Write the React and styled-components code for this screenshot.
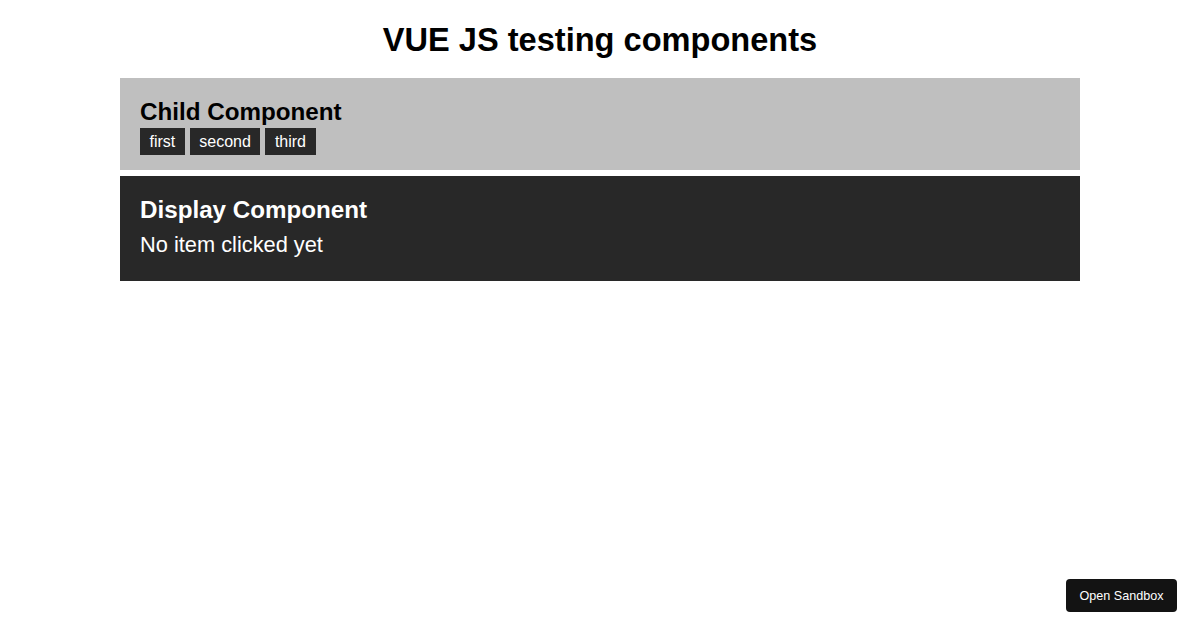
import React from 'react';
import styled, { createGlobalStyle } from 'styled-components';

const GlobalStyle = createGlobalStyle`
  html, body {
    margin: 0;
    padding: 0;
    background: #ffffff;
    font-family: "Liberation Sans", Arial, sans-serif;
  }
`;

const Page = styled.div`
  width: 960px;
  margin: 0 auto;
`;

const Title = styled.h1`
  margin: 21px 0 20px;
  font-size: 32.6px;
  line-height: 37px;
  font-weight: bold;
  text-align: center;
  color: #000;
`;

const Panel = styled.section`
  display: flex;
  flex-direction: column;
  align-items: flex-start;
  padding: ${(p) => (p.dark ? '20px 20px 24px' : '20px 20px 15px')};
  background: ${(p) => (p.dark ? '#282828' : '#bfbfbf')};
  color: ${(p) => (p.dark ? '#ffffff' : '#000000')};
  & + & {
    margin-top: 6px;
  }
`;

const Heading = styled.h2`
  margin: 0;
  font-size: 24.2px;
  line-height: 28px;
  font-weight: bold;
`;

const ItemList = styled.div`
  display: flex;
  gap: 5px;
  margin-top: 2px;
`;

const ItemButton = styled.button`
  height: 27px;
  padding: 0 9.5px;
  border: none;
  border-radius: 0;
  background: #282828;
  color: #ffffff;
  font-family: "Liberation Sans", Arial, sans-serif;
  font-size: 16px;
  cursor: pointer;
`;

const Message = styled.p`
  margin: 8px 0 0;
  font-size: 21.8px;
  line-height: 25px;
`;

const SandboxButton = styled.button`
  position: fixed;
  right: 23px;
  bottom: 18px;
  height: 33px;
  padding: 0 13.5px;
  border: none;
  border-radius: 4px;
  background: #131313;
  color: #ffffff;
  font-family: "Liberation Sans", Arial, sans-serif;
  font-size: 12.6px;
  cursor: pointer;
`;

const items = ['first', 'second', 'third'];

export default function App() {
  return (
    <>
      <GlobalStyle />
      <Page>
        <Title>VUE JS testing components</Title>
        <Panel>
          <Heading>Child Component</Heading>
          <ItemList>
            {items.map((item) => (
              <ItemButton key={item}>{item}</ItemButton>
            ))}
          </ItemList>
        </Panel>
        <Panel dark>
          <Heading>Display Component</Heading>
          <Message>No item clicked yet</Message>
        </Panel>
      </Page>
      <SandboxButton>Open Sandbox</SandboxButton>
    </>
  );
}
